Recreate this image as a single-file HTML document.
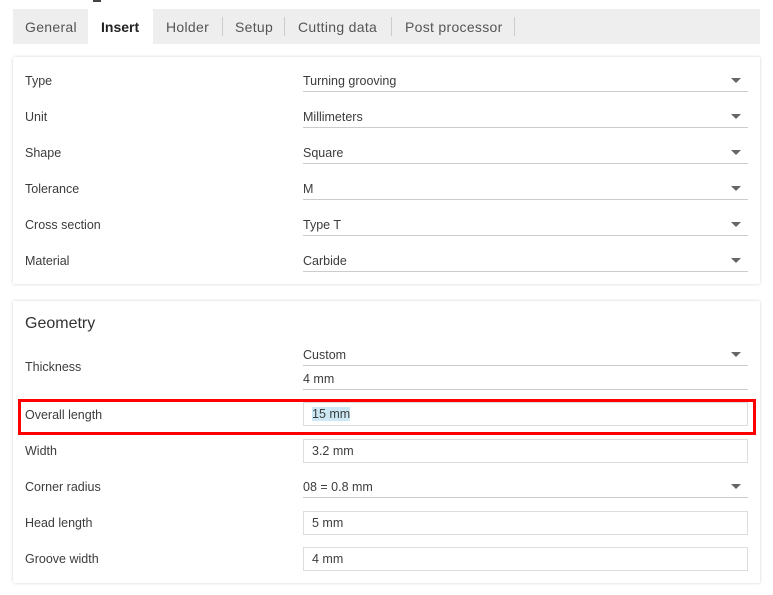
<!DOCTYPE html>
<html><head><meta charset="utf-8"><style>
*{margin:0;padding:0;box-sizing:border-box}
body{width:773px;height:595px;background:#fff;font-family:"Liberation Sans",sans-serif;font-size:12.5px;color:#3c3c3c;position:relative;overflow:hidden}
.a{position:absolute;white-space:nowrap}
.tabs{position:absolute;left:13px;top:9px;width:747px;height:35px;background:#eeeeee}
.tab{position:absolute;top:10px;height:35px;line-height:35px;font-size:14px;color:#555;letter-spacing:0.3px}
.sep{position:absolute;top:17px;width:1px;height:19px;background:#ccc}
.panel{position:absolute;left:13px;width:747px;background:#fff;box-shadow:0 0 3px rgba(0,0,0,.18);border-radius:2px}
.lbl{position:absolute;left:25px;line-height:16px;margin-top:1px}
.sel{position:absolute;left:303px;width:445px;height:24px;border-bottom:1px solid #ccc;line-height:26px}
.sel:after{content:"";position:absolute;right:7px;top:10px;border-left:5px solid transparent;border-right:5px solid transparent;border-top:5px solid #666}
.sel.n:after{display:none}
.inp{position:absolute;left:303px;width:445px;height:24px;border:1px solid #ddd;line-height:22px;padding-left:8px}
</style></head><body>
<div class="a" style="left:93px;top:0;width:8px;height:2px;background:#444"></div>
<div class="tabs"></div>
<div class="a" style="left:88px;top:9px;width:65px;height:35px;background:#fff"></div>
<div class="tab" style="left:25px">General</div>
<div class="tab" style="left:101px;color:#222;font-weight:bold;letter-spacing:0">Insert</div>
<div class="tab" style="left:166px">Holder</div>
<div class="sep" style="left:222px"></div>
<div class="tab" style="left:235px">Setup</div>
<div class="sep" style="left:284px"></div>
<div class="tab" style="left:298px">Cutting data</div>
<div class="sep" style="left:391px"></div>
<div class="tab" style="left:405px">Post processor</div>
<div class="sep" style="left:514px"></div>

<div class="panel" style="top:57px;height:227px"></div>
<div class="lbl" style="top:72px">Type</div><div class="sel" style="top:68px">Turning grooving</div>
<div class="lbl" style="top:108px">Unit</div><div class="sel" style="top:104px">Millimeters</div>
<div class="lbl" style="top:144px">Shape</div><div class="sel" style="top:140px">Square</div>
<div class="lbl" style="top:180px">Tolerance</div><div class="sel" style="top:176px">M</div>
<div class="lbl" style="top:216px">Cross section</div><div class="sel" style="top:212px">Type T</div>
<div class="lbl" style="top:252px">Material</div><div class="sel" style="top:248px">Carbide</div>

<div class="panel" style="top:301px;height:282px"></div>
<div class="a" style="left:25px;top:315px;font-size:16px;color:#333">Geometry</div>
<div class="lbl" style="top:358px">Thickness</div>
<div class="sel" style="top:342px">Custom</div>
<div class="sel n" style="top:366px">4 mm</div>
<div class="lbl" style="top:406px">Overall length</div>
<div class="inp" style="top:402px"><span style="background:#cce8f4">15 mm</span></div>
<div class="a" style="left:18px;top:399px;width:738px;height:36px;border:3px solid #f00"></div>
<div class="lbl" style="top:442px">Width</div><div class="inp" style="top:439px">3.2 mm</div>
<div class="lbl" style="top:478px">Corner radius</div><div class="sel" style="top:474px">08 = 0.8 mm</div>
<div class="lbl" style="top:514px">Head length</div><div class="inp" style="top:511px">5 mm</div>
<div class="lbl" style="top:550px">Groove width</div><div class="inp" style="top:547px">4 mm</div>
</body></html>
